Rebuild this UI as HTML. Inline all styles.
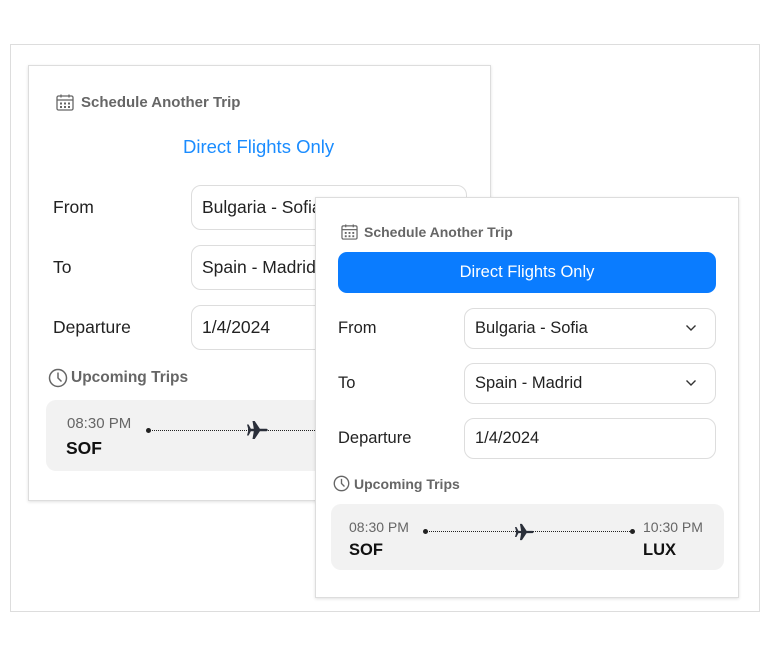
<!DOCTYPE html>
<html><head><style>
*{box-sizing:border-box;margin:0;padding:0}
body{width:770px;height:656px;background:#fff;font-family:"Liberation Sans",sans-serif;position:relative;overflow:hidden}
.abs{position:absolute}
.frame{left:10px;top:44px;width:750px;height:568px;border:1px solid #ddd}
.card{background:#fff;border:1px solid #ddd;box-shadow:0 1px 3px rgba(0,0,0,.12)}
.hdr{color:#666;font-weight:bold;white-space:nowrap}
.lbl{color:#222;white-space:nowrap}
.inp{border:1px solid #ddd;background:#fff;color:#222;white-space:nowrap;overflow:hidden;display:flex;align-items:center}
.trip{background:#f2f2f2;border-radius:10px}
.dots{border-top:1.5px dotted #222}
.dot{width:5px;height:5px;border-radius:50%;background:#222}
</style></head><body>
<div class="abs frame"></div>

<!-- back card -->
<div class="abs card" style="left:28px;top:65px;width:463px;height:436px;overflow:hidden">
  <svg class="abs" style="left:27px;top:28px" width="18" height="17" viewBox="0 0 18 17"><rect x="1" y="2" width="16" height="14" rx="1.5" fill="none" stroke="#666" stroke-width="1.3"/><line x1="1" y1="6" x2="17" y2="6" stroke="#666" stroke-width="1.3"/><line x1="5" y1="0.5" x2="5" y2="3.5" stroke="#666" stroke-width="1.3"/><line x1="13" y1="0.5" x2="13" y2="3.5" stroke="#666" stroke-width="1.3"/><g fill="#666"><rect x="4" y="8.5" width="2" height="2"/><rect x="8" y="8.5" width="2" height="2"/><rect x="12" y="8.5" width="2" height="2"/><rect x="4" y="12" width="2" height="2"/><rect x="8" y="12" width="2" height="2"/><rect x="12" y="12" width="2" height="2"/></g></svg>
  <div class="abs hdr" style="left:52px;top:28px;font-size:15px">Schedule Another Trip</div>
  <div class="abs" style="left:154px;top:70px;font-size:18.5px;color:#1a8cff">Direct Flights Only</div>
  <div class="abs lbl" style="left:24px;top:131px;font-size:17.5px">From</div>
  <div class="abs inp" style="left:162px;top:119px;width:276px;height:45px;border-radius:10px;padding-left:10px;font-size:17.5px">Bulgaria - Sofia</div>
  <div class="abs lbl" style="left:24px;top:191px;font-size:17.5px">To</div>
  <div class="abs inp" style="left:162px;top:179px;width:276px;height:45px;border-radius:10px;padding-left:10px;font-size:17.5px">Spain - Madrid</div>
  <div class="abs lbl" style="left:24px;top:251px;font-size:17.5px">Departure</div>
  <div class="abs inp" style="left:162px;top:239px;width:276px;height:45px;border-radius:10px;padding-left:10px;font-size:17.5px">1/4/2024</div>
  <svg class="abs" style="left:19px;top:302px" width="20" height="20" viewBox="0 0 20 20"><circle cx="10" cy="10" r="8.5" fill="none" stroke="#666" stroke-width="1.5"/><path d="M10 4.5V10l3.5 3.5" fill="none" stroke="#666" stroke-width="1.5"/></svg>
  <div class="abs hdr" style="left:42px;top:303px;font-size:15.5px">Upcoming Trips</div>
  <div class="abs trip" style="left:17px;top:334px;width:460px;height:71px"></div>
  <div class="abs" style="left:38px;top:349px;font-size:15px;color:#666">08:30 PM</div>
  <div class="abs" style="left:37px;top:372px;font-size:17.5px;font-weight:bold;color:#111">SOF</div>
  <div class="abs dot" style="left:117px;top:362px"></div>
  <div class="abs dots" style="left:120px;top:364px;width:200px"></div>
  <svg class="abs" style="left:216px;top:354px" width="24" height="20" viewBox="0 0 24 20"><path d="M3 8.8h18.5a1.2 1.2 0 0 1 0 2.4H3z M9 10L7.5 1h2.2l6 9-6 9H7.5z M3.5 10L2 4.5h1.6L6.5 10l-2.9 5.5H2z" fill="#2a2f3a"/></svg>
</div>

<!-- front card -->
<div class="abs card" style="left:315px;top:197px;width:424px;height:401px">
  <svg class="abs" style="left:25px;top:26px" width="17" height="16" viewBox="0 0 18 17"><rect x="1" y="2" width="16" height="14" rx="1.5" fill="none" stroke="#666" stroke-width="1.3"/><line x1="1" y1="6" x2="17" y2="6" stroke="#666" stroke-width="1.3"/><line x1="5" y1="0.5" x2="5" y2="3.5" stroke="#666" stroke-width="1.3"/><line x1="13" y1="0.5" x2="13" y2="3.5" stroke="#666" stroke-width="1.3"/><g fill="#666"><rect x="4" y="8.5" width="2" height="2"/><rect x="8" y="8.5" width="2" height="2"/><rect x="12" y="8.5" width="2" height="2"/><rect x="4" y="12" width="2" height="2"/><rect x="8" y="12" width="2" height="2"/><rect x="12" y="12" width="2" height="2"/></g></svg>
  <div class="abs hdr" style="left:48px;top:26px;font-size:14px">Schedule Another Trip</div>
  <div class="abs" style="left:22px;top:54px;width:378px;height:41px;background:#0a7cff;border-radius:9px;color:#fff;font-size:16.5px;display:flex;align-items:center;justify-content:center">Direct Flights Only</div>
  <div class="abs lbl" style="left:22px;top:121px;font-size:16.5px">From</div>
  <div class="abs inp" style="left:148px;top:110px;width:252px;height:41px;border-radius:10px;padding-left:10px;font-size:16.5px">Bulgaria - Sofia</div>
  <svg class="abs" style="left:369px;top:126px" width="12" height="8" viewBox="0 0 12 8"><path d="M1.5 1.5L6 6l4.5-4.5" fill="none" stroke="#333" stroke-width="1.4"/></svg>
  <div class="abs lbl" style="left:22px;top:176px;font-size:16.5px">To</div>
  <div class="abs inp" style="left:148px;top:165px;width:252px;height:41px;border-radius:10px;padding-left:10px;font-size:16.5px">Spain - Madrid</div>
  <svg class="abs" style="left:369px;top:181px" width="12" height="8" viewBox="0 0 12 8"><path d="M1.5 1.5L6 6l4.5-4.5" fill="none" stroke="#333" stroke-width="1.4"/></svg>
  <div class="abs lbl" style="left:22px;top:231px;font-size:16.5px">Departure</div>
  <div class="abs inp" style="left:148px;top:220px;width:252px;height:41px;border-radius:10px;padding-left:10px;font-size:16.5px">1/4/2024</div>
  <svg class="abs" style="left:17px;top:277px" width="17" height="17" viewBox="0 0 20 20"><circle cx="10" cy="10" r="8.5" fill="none" stroke="#666" stroke-width="1.6"/><path d="M10 4.5V10l3.5 3.5" fill="none" stroke="#666" stroke-width="1.6"/></svg>
  <div class="abs hdr" style="left:38px;top:278px;font-size:14px">Upcoming Trips</div>
  <div class="abs trip" style="left:15px;top:306px;width:393px;height:66px"></div>
  <div class="abs" style="left:33px;top:321px;font-size:14px;color:#666">08:30 PM</div>
  <div class="abs" style="left:33px;top:343px;font-size:16.5px;font-weight:bold;color:#111">SOF</div>
  <div class="abs dot" style="left:107px;top:331px"></div>
  <div class="abs dots" style="left:110px;top:333px;width:208px"></div>
  <div class="abs dot" style="left:314px;top:331px"></div>
  <svg class="abs" style="left:197px;top:325px" width="22" height="18" viewBox="0 0 24 20"><path d="M3 8.8h18.5a1.2 1.2 0 0 1 0 2.4H3z M9 10L7.5 1h2.2l6 9-6 9H7.5z M3.5 10L2 4.5h1.6L6.5 10l-2.9 5.5H2z" fill="#2a2f3a"/></svg>
  <div class="abs" style="left:327px;top:321px;font-size:14px;color:#666">10:30 PM</div>
  <div class="abs" style="left:327px;top:343px;font-size:16.5px;font-weight:bold;color:#111">LUX</div>
</div>
</body></html>
